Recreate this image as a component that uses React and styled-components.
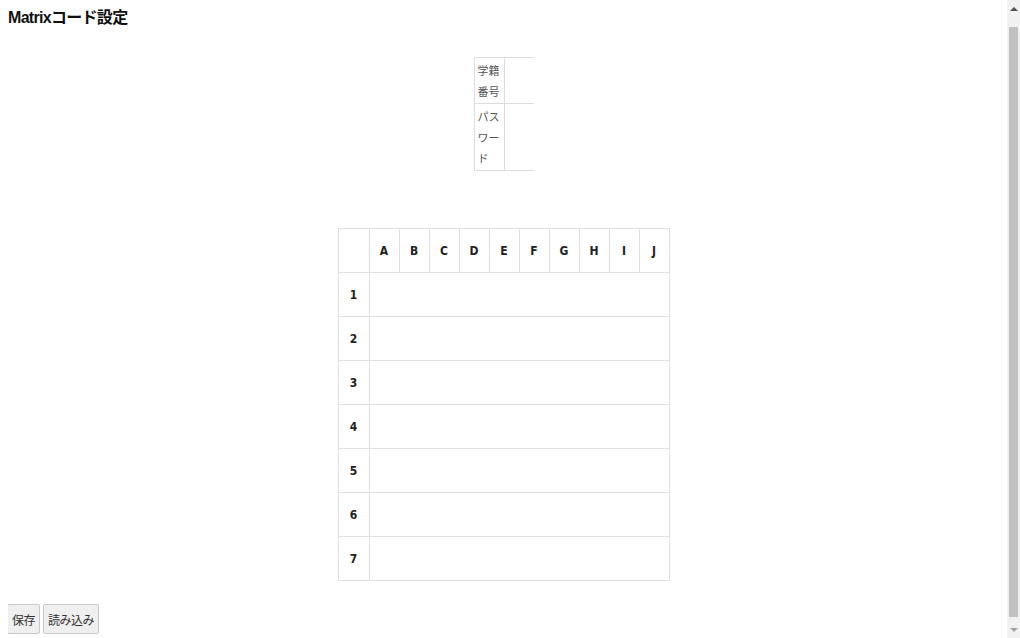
import styled, { createGlobalStyle } from "styled-components";

const GlobalStyle = createGlobalStyle`
  body {
    margin: 8px 21px 8px 8px;
    font-family: "Liberation Sans", "Noto Sans CJK JP", sans-serif;
    color: #222;
    background: #fff;
  }
`;

const Title = styled.h1`
  margin: 0;
  font-size: 16px;
  line-height: 20px;
  font-weight: bold;
  color: #111;
  letter-spacing: -0.7px;
`;

const Center = styled.div`
  display: flex;
  flex-direction: column;
  align-items: center;
`;

const LoginTable = styled.table`
  border-collapse: collapse;
  margin-top: 29px;
  font-family: "Noto Sans CJK JP", sans-serif;
`;

const LoginLabel = styled.th`
  width: 23px;
  padding: 2px 3px 1px;
  border: 1px solid #ddd;
  font-size: 11px;
  line-height: 21px;
  font-weight: normal;
  color: #555;
  text-align: left;
  vertical-align: top;
  word-break: break-all;
`;

const LoginValue = styled.td`
  width: 29px;
  padding: 0;
  border-top: 1px solid #ddd;
  border-bottom: 1px solid #ddd;
`;

const MatrixTable = styled.table`
  border-collapse: collapse;
  margin-top: 57px;
  font-family: "Liberation Sans Narrow", "DejaVu Sans Condensed", "Liberation Sans", sans-serif;
  font-stretch: condensed;
`;

const Cell = styled.th`
  width: ${(p) => (p.$first ? "30px" : "29px")};
  height: 43px;
  padding: 0;
  border: 1px solid #e0e0e0;
  font-size: 12px;
  font-weight: bold;
  color: #222;
  text-align: center;
  vertical-align: middle;
`;

const BodyCell = styled.td`
  height: 43px;
  padding: 0;
  border: 1px solid #e0e0e0;
`;

const ButtonRow = styled.div`
  display: flex;
  gap: 3px;
  margin-top: 23px;
  margin-left: -1px;
`;

const Button = styled.button`
  height: 30px;
  padding: 0 4px;
  border: 1px solid #c8c8c8;
  border-radius: 2px;
  background: #efefef;
  font-family: "Noto Sans CJK JP", sans-serif;
  font-size: 12px;
  color: #333;
  letter-spacing: -0.5px;
`;

/* the window scrollbar seen in the screenshot */
const ScrollBar = styled.div`
  position: fixed;
  top: 0;
  right: 0;
  bottom: 0;
  width: 13px;
  background: #f1f1f1;
  display: flex;
  flex-direction: column;
  align-items: center;
`;

const Arrow = styled.div`
  height: 17px;
  display: flex;
  align-items: center;
  justify-content: center;
  &::before {
    content: "";
    border-left: 4px solid transparent;
    border-right: 4px solid transparent;
    ${(p) =>
      p.$down
        ? "border-top: 4px solid #a3a3a3;"
        : "border-bottom: 4px solid #505050;"}
  }
`;

const Thumb = styled.div`
  flex: 1;
  width: 9px;
  margin: 10px 0 4px;
  background: #c1c1c1;
`;

const letters = ["A", "B", "C", "D", "E", "F", "G", "H", "I", "J"];
const rows = [1, 2, 3, 4, 5, 6, 7];

export default function App() {
  return (
    <>
      <GlobalStyle />
      <Title>Matrixコード設定</Title>
      <Center>
        <LoginTable>
          <tbody>
            <tr>
              <LoginLabel>学籍番号</LoginLabel>
              <LoginValue />
            </tr>
            <tr>
              <LoginLabel>パスワード</LoginLabel>
              <LoginValue />
            </tr>
          </tbody>
        </LoginTable>
        <MatrixTable>
          <thead>
            <tr>
              <Cell $first />
              {letters.map((l) => (
                <Cell key={l}>{l}</Cell>
              ))}
            </tr>
          </thead>
          <tbody>
            {rows.map((r) => (
              <tr key={r}>
                <Cell as="td" $first>
                  {r}
                </Cell>
                <BodyCell colSpan={10} />
              </tr>
            ))}
          </tbody>
        </MatrixTable>
      </Center>
      <ButtonRow>
        <Button>保存</Button>
        <Button>読み込み</Button>
      </ButtonRow>
      <ScrollBar>
        <Arrow />
        <Thumb />
        <Arrow $down />
      </ScrollBar>
    </>
  );
}
